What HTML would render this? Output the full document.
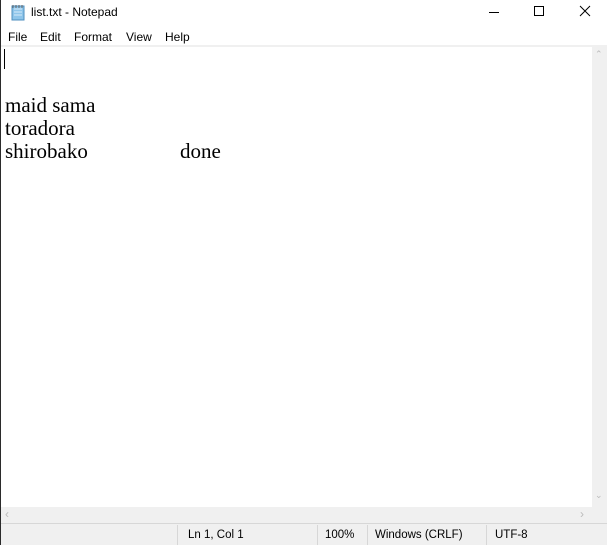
<!DOCTYPE html>
<html><head><style>
body{margin:0;width:607px;height:545px;overflow:hidden;background:#fff;font-family:"Segoe UI","Liberation Sans",sans-serif;position:relative}
.a{position:absolute}
.ui{font-size:12px;color:#000}
.txt{font-family:"Liberation Serif",serif;font-size:21px;color:#000;line-height:23px;white-space:pre}
</style></head><body>
<div class="a" style="left:0;top:0;width:1px;height:545px;background:#2b2b2b"></div>
<svg class="a" style="left:9px;top:4px" width="18" height="17" viewBox="0 0 18 17">
<rect x="3" y="2" width="12" height="14" fill="#8ec5ea" stroke="#4f8fbf"/>
<path d="M5 5h8M5 8h8M5 11h8" stroke="#d7ecfa"/>
<path d="M4 1v3M7 1v3M10 1v3M13 1v3" stroke="#666"/>
</svg>
<div class="a ui" style="left:31px;top:5px">list.txt - Notepad</div>
<svg class="a" style="left:488px;top:5px" width="110" height="14">
<path d="M1 7.5h10" stroke="#000"/>
<rect x="46.5" y="1.5" width="9" height="9" fill="none" stroke="#000"/>
<path d="M92 1l10 10M102 1l-10 10" stroke="#000"/>
</svg>
<div class="a ui" style="left:8px;top:30px">File</div>
<div class="a ui" style="left:40px;top:30px">Edit</div>
<div class="a ui" style="left:74px;top:30px">Format</div>
<div class="a ui" style="left:126px;top:30px">View</div>
<div class="a ui" style="left:165px;top:30px">Help</div>
<div class="a" style="left:1px;top:45px;width:606px;height:2px;background:#f0f0f0"></div>
<div class="a" style="left:4px;top:49px;width:1px;height:20px;background:#000"></div>
<div class="a txt" style="left:5px;top:94px">maid sama
toradora
shirobako</div>
<div class="a txt" style="left:180px;top:140px">done</div>
<div class="a" style="left:592px;top:47px;width:15px;height:476px;background:#f0f0f0"></div>
<div class="a" style="left:1px;top:507px;width:606px;height:16px;background:#f0f0f0"></div>
<div class="a" style="left:595px;top:49px;font-size:9px;color:#bbb">&#8963;</div>
<div class="a" style="left:595px;top:490px;font-size:9px;color:#bbb">&#8964;</div>
<div class="a" style="left:5px;top:507px;font-size:12px;color:#bbb">&lsaquo;</div>
<div class="a" style="left:580px;top:507px;font-size:12px;color:#bbb">&rsaquo;</div>
<div class="a" style="left:1px;top:523px;width:606px;height:1px;background:#d7d7d7"></div>
<div class="a" style="left:1px;top:524px;width:606px;height:21px;background:#f0f0f0"></div>
<div class="a" style="left:177px;top:525px;width:1px;height:20px;background:#d7d7d7"></div>
<div class="a" style="left:317px;top:525px;width:1px;height:20px;background:#d7d7d7"></div>
<div class="a" style="left:367px;top:525px;width:1px;height:20px;background:#d7d7d7"></div>
<div class="a" style="left:486px;top:525px;width:1px;height:20px;background:#d7d7d7"></div>
<div class="a ui" style="left:188px;top:529px;font-size:11.5px">Ln 1, Col 1</div>
<div class="a ui" style="left:325px;top:529px;font-size:11.5px">100%</div>
<div class="a ui" style="left:375px;top:529px;font-size:11.5px">Windows (CRLF)</div>
<div class="a ui" style="left:495px;top:529px;font-size:11.5px">UTF-8</div>
</body></html>
